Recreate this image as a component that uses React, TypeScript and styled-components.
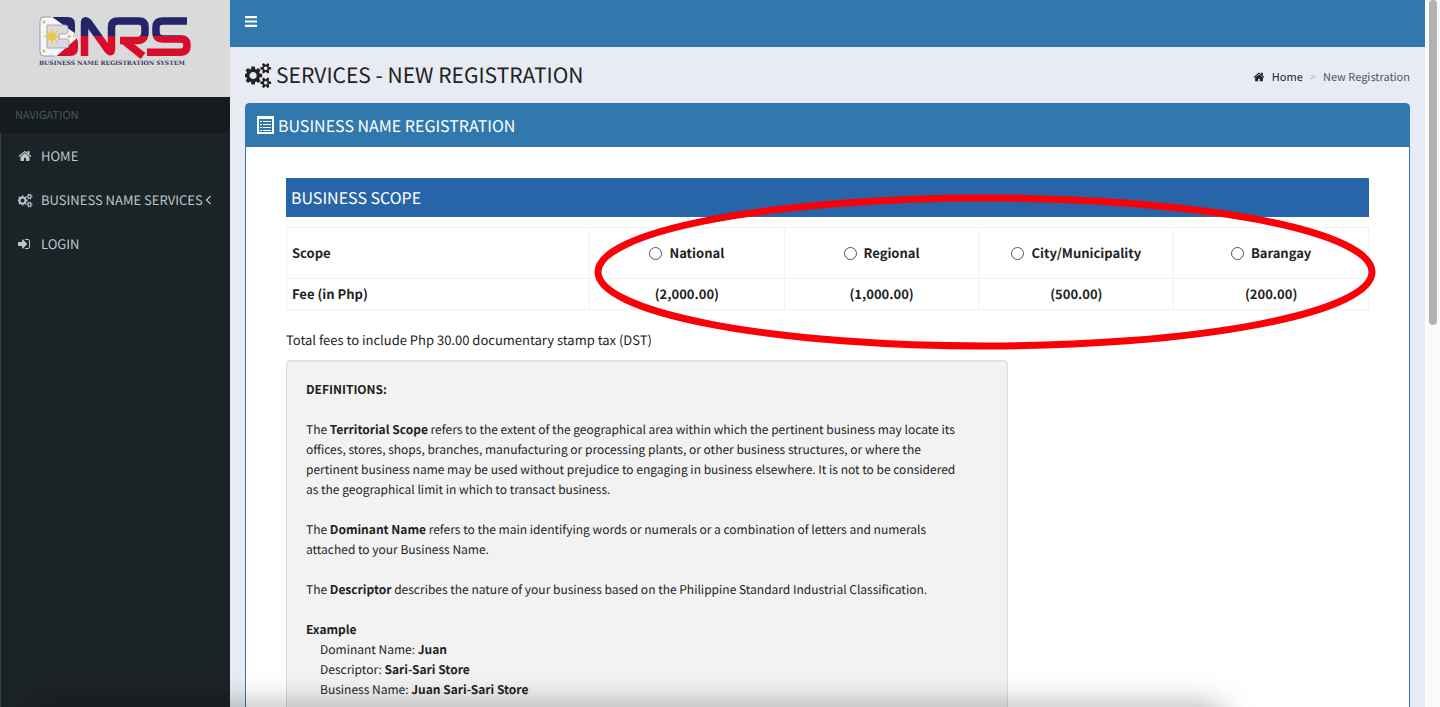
import React from "react";
import styled, { createGlobalStyle } from "styled-components";

const blue = "#3078ad";

const GlobalStyle = createGlobalStyle`
  * { box-sizing: border-box; }
  body {
    margin: 0;
    color: #222;
    font-family: "Noto Sans CJK SC", "Noto Sans", sans-serif;
    font-size: 13px;
    line-height: 20px;
    text-rendering: geometricPrecision;
  }
  a { color: inherit; text-decoration: none; }
  h1, h2, h3, p { margin: 0; font-weight: 400; }
`;

const Page = styled.div`
  position: relative;
  display: flex;
  height: 100vh;
  overflow: hidden;
`;

const Sidebar = styled.aside`
  flex: 0 0 230px;
  background: #1c2326;
  color: #b8c7ce;
  box-shadow: inset 1px 0 #3a4043;
`;

const Brand = styled.a`
  display: flex;
  height: 97px;
  padding: 14px 0 0 38px;
  background: #dadada;
`;

const NavHeading = styled.h2`
  padding: 8px 15px;
  background: #161b1e;
  color: #455861;
  font-size: 11px;
  line-height: 20px;
`;

const NavList = styled.ul`
  margin: 0;
  padding: 1px 0 0;
  list-style: none;
`;

const NavLink = styled.a`
  display: flex;
  align-items: center;
  height: 44px;
  padding: 0 18px;
  white-space: nowrap;
`;

const NavIcon = styled.span`
  display: flex;
  width: 23px;
`;

const NavArrow = styled.span`
  display: flex;
  margin-left: auto;
`;

const Main = styled.main`
  flex: 1;
  min-width: 0;
  background: #e8ebf3;
`;

const TopBar = styled.header`
  display: flex;
  align-items: center;
  height: 47px;
  padding: 0 15px 4px;
  background: ${blue};
`;

const MenuButton = styled.button`
  display: flex;
  padding: 0;
  border: 0;
  background: none;
  color: #fff;
`;

const TitleRow = styled.div`
  display: flex;
  align-items: center;
  justify-content: space-between;
  height: 56px;
  padding: 0 15px;
`;

const Title = styled.h1`
  display: flex;
  align-items: center;
  gap: 4px;
  font-size: 21px;
  line-height: 28px;
`;

const Crumbs = styled.nav`
  display: flex;
  align-items: center;
  gap: 7px;
  padding-top: 4px;
  font-size: 11px;
  color: #555;
`;

const CrumbLink = styled.a`
  display: flex;
  align-items: center;
  gap: 7px;
  color: #222;
`;

const Separator = styled.span`
  color: #bbb;
`;

const Panel = styled.section`
  margin: 0 15px;
  border: 1px solid ${blue};
  border-radius: 4px 4px 0 0;
  background: #fff;
`;

const PanelHeading = styled.h2`
  display: flex;
  align-items: center;
  gap: 4px;
  height: 43px;
  padding: 0 11px 2px;
  background: ${blue};
  color: #fff;
  font-size: 16px;
`;

const PanelBody = styled.div`
  padding: 31px 40px;
`;

const SectionHeading = styled.h3`
  height: 39px;
  margin-bottom: 10px;
  padding: 0 5px;
  background: #2864a8;
  color: #fff;
  font-size: 16px;
  line-height: 38px;
`;

const FeeTable = styled.table`
  width: 100%;
  border-collapse: collapse;
  table-layout: fixed;
  margin-bottom: 20px;
`;

const Cell = styled.td<{ $tall?: boolean }>`
  height: ${(p) => (p.$tall ? 51 : 31)}px;
  padding: 0 5px;
  border: 1px solid #f1f1f1;
  text-align: center;
  font-weight: 700;
`;

const RowHead = styled.th<{ $tall?: boolean }>`
  width: 28%;
  height: ${(p) => (p.$tall ? 51 : 31)}px;
  padding: 0 5px;
  border: 1px solid #f1f1f1;
  text-align: left;
`;

const Option = styled.label`
  display: flex;
  align-items: center;
  justify-content: center;
  gap: 7px;
`;

const Radio = styled.input`
  appearance: none;
  width: 13px;
  height: 13px;
  margin: 0;
  border: 1px solid #555;
  border-radius: 50%;
  background: #fff;
`;

const Definitions = styled.div`
  width: 722px;
  max-width: 100%;
  min-height: 400px;
  margin-top: 10px;
  padding: 19px 40px 19px 19px;
  border: 1px solid #dcdcdc;
  border-radius: 4px;
  background: #f2f2f2;
  box-shadow: inset 0 1px 1px rgba(0, 0, 0, 0.05);
  font-size: 12px;
`;

const Paragraph = styled.p`
  margin-bottom: 20px;
`;

const Example = styled.div`
  padding-left: 14px;
`;

const ScrollTrack = styled.div`
  flex: 0 0 15px;
  padding: 0 3px 0 4px;
  background: #fafafa;
`;

const ScrollThumb = styled.div`
  height: 46vh;
  border-radius: 4px;
  background: #b1b1b1;
`;

const Highlight = styled.svg`
  position: absolute;
  left: 593px;
  top: 193px;
  width: 784px;
  height: 157px;
  pointer-events: none;
`;

const BottomShade = styled.div`
  position: absolute;
  left: 30px;
  right: 215px;
  bottom: -30px;
  height: 30px;
  border-radius: 20px;
  box-shadow: 0 0 32px rgba(0, 0, 0, 0.35);
  pointer-events: none;
`;

const scopes = [
  { name: "National", fee: "(2,000.00)" },
  { name: "Regional", fee: "(1,000.00)" },
  { name: "City/Municipality", fee: "(500.00)" },
  { name: "Barangay", fee: "(200.00)" },
];

function HomeIcon({ size }: { size: number }) {
  return (
    <svg width={size} height={size} viewBox="0 0 1792 1792" fill="currentColor" aria-hidden="true">
      <path d="M1472 992v480q0 26-19 45t-45 19h-384v-384h-256v384h-384q-26 0-45-19t-19-45v-480q0-1 .5-3t.5-3l575-474 575 474q1 2 1 6zm223-69l-62 74q-8 9-21 11h-3q-13 0-21-7l-692-577-692 577q-12 8-24 7-13-2-21-11l-62-74q-8-10-7-23.5t11-21.5l719-599q32-26 76-26t76 26l244 204v-195q0-14 9-23t23-9h192q14 0 23 9t9 23v408l219 182q10 8 11 21.5t-7 23.5z" />
    </svg>
  );
}

function CogsIcon({ size }: { size: number }) {
  return (
    <svg width={size} height={size} viewBox="0 0 1920 1792" fill="currentColor" aria-hidden="true">
      <path d="M832 896q0-106-75-181t-181-75-181 75-75 181 75 181 181 75 181-75 75-181zm768 512q0-52-38-90t-90-38-90 38-38 90q0 53 37.5 90.5t90.5 37.5 90.5-37.5 37.5-90.5zm0-1024q0-52-38-90t-90-38-90 38-38 90q0 53 37.5 90.5t90.5 37.5 90.5-37.5 37.5-90.5zm-384 421v185q0 10-7 19.5t-16 10.5l-155 24q-11 35-32 76 34 48 90 115 7 11 7 20 0 12-7 19-23 30-82.5 89.5t-78.5 59.5q-11 0-21-7l-115-90q-37 19-77 31-11 108-23 155-7 24-30 24h-186q-11 0-20-7.5t-10-17.5l-23-153q-34-10-75-31l-118 89q-7 7-20 7-11 0-21-8-144-133-144-160 0-9 7-19 10-14 41-53t47-61q-23-44-35-82l-152-24q-10-1-17-9.5t-7-19.5v-185q0-10 7-19.5t16-10.5l155-24q11-35 32-76-34-48-90-115-7-11-7-20 0-12 7-20 22-30 82-89t79-59q11 0 21 7l115 90q34-18 77-32 11-108 23-154 7-24 30-24h186q11 0 20 7.5t10 17.5l23 153q34 10 75 31l118-89q8-7 20-7 11 0 21 8 144 133 144 160 0 8-7 19-12 16-42 54t-45 60q23 48 34 82l152 23q10 2 17 10.5t7 19.5zm640 533v140q0 16-149 31-12 27-30 52 51 113 51 138 0 4-4 7-122 71-124 71-8 0-46-47t-52-68q-20 2-30 2t-30-2q-14 21-52 68t-46 47q-2 0-124-71-4-3-4-7 0-25 51-138-18-25-30-52-149-15-149-31v-140q0-16 149-31 13-29 30-52-51-113-51-138 0-4 4-7 4-2 35-20t59-34 30-16q8 0 46 46.5t52 67.5q20-2 30-2t30 2q51-71 92-112l6-2q4 0 124 70 4 3 4 7 0 25-51 138 17 23 30 52 149 15 149 31zm0-1024v140q0 16-149 31-12 27-30 52 51 113 51 138 0 4-4 7-122 71-124 71-8 0-46-47t-52-68q-20 2-30 2t-30-2q-14 21-52 68t-46 47q-2 0-124-71-4-3-4-7 0-25 51-138-18-25-30-52-149-15-149-31v-140q0-16 149-31 13-29 30-52-51-113-51-138 0-4 4-7 4-2 35-20t59-34 30-16q8 0 46 46.5t52 67.5q20-2 30-2t30 2q51-71 92-112l6-2q4 0 124 70 4 3 4 7 0 25-51 138 17 23 30 52 149 15 149 31z" />
    </svg>
  );
}

function SignInIcon() {
  return (
    <svg width="14" height="14" viewBox="128 0 1792 1792" fill="currentColor" aria-hidden="true">
      <path d="M1312 896q0 26-19 45l-544 544q-19 19-45 19t-45-19-19-45v-288h-448q-26 0-45-19t-19-45v-384q0-26 19-45t45-19h448v-288q0-26 19-45t45-19 45 19l544 544q19 19 19 45zm352-352v704q0 119-84.5 203.5t-203.5 84.5h-320q-13 0-22.5-9.5t-9.5-22.5q0-4-1-20t-.5-26.5 3-23.5 10-19.5 20.5-6.5h320q66 0 113-47t47-113v-704q0-66-47-113t-113-47h-312l-11.5-1-11.5-3-8-5.5-7-9-2-13.5q0-4-1-20t-.5-26.5 3-23.5 10-19.5 20.5-6.5h320q119 0 203.5 84.5t84.5 203.5z" />
    </svg>
  );
}

function ArrowIcon() {
  return (
    <svg width="7" height="10" viewBox="0 0 7 10" fill="none" stroke="currentColor" strokeWidth="1.2" aria-hidden="true">
      <path d="M5.5 1L1.5 5L5.5 9" />
    </svg>
  );
}

function BarsIcon() {
  return (
    <svg width="12" height="11" viewBox="0 0 12 11" fill="currentColor" aria-hidden="true">
      <path d="M0 0H12V2.2H0ZM0 4.4H12V6.6H0ZM0 8.8H12V11H0Z" />
    </svg>
  );
}

function ListIcon() {
  return (
    <svg width="17" height="18" viewBox="0 0 17 18" fill="none" stroke="currentColor" aria-hidden="true">
      <path d="M0 1.5H17" strokeWidth="3" />
      <path d="M1 1V17H16V1" strokeWidth="2" />
      <path d="M3 5.5H5M6 5.5H14M3 8.5H5M6 8.5H14M3 11.5H5M6 11.5H14M3 14.5H5M6 14.5H14" />
    </svg>
  );
}

function Logo() {
  return (
    <svg width="154" height="56" viewBox="0 0 154 56" role="img" aria-label="BNRS">
      <defs>
        <linearGradient id="flag" gradientUnits="userSpaceOnUse" x1="0" y1="3" x2="0" y2="42">
          <stop offset="49%" stopColor="#232568" />
          <stop offset="49%" stopColor="#d80c2b" />
        </linearGradient>
        <clipPath id="letterB">
          <path d="M6 3H30Q37 3 37 10V17Q37 20 35 22Q40 24 40 29V34Q40 42 32 42H6Q2 42 2 38V7Q2 3 6 3Z" />
        </clipPath>
      </defs>
      <g clipPath="url(#letterB)">
        <path d="M0 0H42V46H0Z" fill="url(#flag)" />
        <path d="M0 0L10 0L38 20V25L14 46H0Z" fill="#f6f6f7" />
      </g>
      <path d="M13 3H6Q2 3 2 7V38Q2 42 6 42H17" fill="none" stroke="#9598bd" />
      <path d="M9 11H27Q30 11 30 14V17Q30 20 27 20H21V25H28Q31 25 31 28V31Q31 34 28 34H9Z" fill="#dadada" stroke="#9598bd" strokeWidth=".8" />
      <path d="M14 15V30M6 22.500H22M8.500 17L19.500 28M19.500 17L8.500 28" stroke="#efc64d" strokeWidth="1.5" />
      <circle cx="14" cy="22.500" r="4" fill="#efc64d" />
      <g fill="#e9c75c">
        <circle cx="6" cy="8" r="1.800" />
        <circle cx="6" cy="37" r="1.800" />
        <circle cx="31" cy="22.500" r="1.800" />
      </g>
      <g fill="none" stroke="url(#flag)" strokeWidth="7.500" strokeLinejoin="round">
        <path d="M46.500 42V9Q46.500 5 50 8L70 36Q73.500 40 73.500 35V13Q73.500 7 80 7H101Q107 7 107 13V18Q107 26 100 26.500H82" />
        <path d="M85 26L105 42" />
        <path d="M149 7H125Q118 7 118 13V18Q118 25 125 25H143Q149 25 149 31V32Q149 38.200 143 38.200H109" />
      </g>
      <text x="1" y="51" fill="#34366f" fontFamily="DejaVu Serif, serif" fontSize="6" fontWeight="700">BUSINESS NAME REGISTRATION SYSTEM</text>
    </svg>
  );
}

export default function App() {
  return (
    <>
      <GlobalStyle />
      <Page>
        <Sidebar>
          <Brand href="#"><Logo /></Brand>
          <NavHeading>NAVIGATION</NavHeading>
          <NavList>
            <li><NavLink href="#"><NavIcon><HomeIcon size={14} /></NavIcon>HOME</NavLink></li>
            <li>
              <NavLink href="#">
                <NavIcon><CogsIcon size={15} /></NavIcon>BUSINESS NAME SERVICES
                <NavArrow><ArrowIcon /></NavArrow>
              </NavLink>
            </li>
            <li><NavLink href="#"><NavIcon><SignInIcon /></NavIcon>LOGIN</NavLink></li>
          </NavList>
        </Sidebar>
        <Main>
          <TopBar><MenuButton aria-label="Toggle navigation"><BarsIcon /></MenuButton></TopBar>
          <TitleRow>
            <Title><CogsIcon size={27} />SERVICES - NEW REGISTRATION</Title>
            <Crumbs aria-label="Breadcrumb">
              <CrumbLink href="#"><HomeIcon size={12} />Home</CrumbLink>
              <Separator>&gt;</Separator>
              <span>New Registration</span>
            </Crumbs>
          </TitleRow>
          <Panel>
            <PanelHeading><ListIcon />BUSINESS NAME REGISTRATION</PanelHeading>
            <PanelBody>
              <SectionHeading>BUSINESS SCOPE</SectionHeading>
              <FeeTable>
                <tbody>
                  <tr>
                    <RowHead scope="row" $tall>Scope</RowHead>
                    {scopes.map((s) => (
                      <Cell key={s.name} $tall>
                        <Option><Radio type="radio" name="scope" />{s.name}</Option>
                      </Cell>
                    ))}
                  </tr>
                  <tr>
                    <RowHead scope="row">Fee (in Php)</RowHead>
                    {scopes.map((s) => <Cell key={s.name}>{s.fee}</Cell>)}
                  </tr>
                </tbody>
              </FeeTable>
              <p>Total fees to include Php 30.00 documentary stamp tax (DST)</p>
              <Definitions>
                <Paragraph><b>DEFINITIONS:</b></Paragraph>
                <Paragraph>
                  The <b>Territorial Scope</b> refers to the extent of the geographical area within which the pertinent business may locate its offices, stores, shops, branches, manufacturing or processing plants, or other business structures, or where the pertinent business name may be used without prejudice to engaging in business elsewhere. It is not to be considered as the geographical limit in which to transact business.
                </Paragraph>
                <Paragraph>
                  The <b>Dominant Name</b> refers to the main identifying words or numerals or a combination of letters and numerals attached to your Business Name.
                </Paragraph>
                <Paragraph>
                  The <b>Descriptor</b> describes the nature of your business based on the Philippine Standard Industrial Classification.
                </Paragraph>
                <p><b>Example</b></p>
                <Example>
                  <p>Dominant Name: <b>Juan</b></p>
                  <p>Descriptor: <b>Sari-Sari Store</b></p>
                  <p>Business Name: <b>Juan Sari-Sari Store</b></p>
                </Example>
              </Definitions>
            </PanelBody>
          </Panel>
        </Main>
        <ScrollTrack><ScrollThumb /></ScrollTrack>
        <Highlight viewBox="0 0 784 157" aria-hidden="true">
          <ellipse cx="392" cy="79" rx="387" ry="74" fill="none" stroke="#fb0007" strokeWidth="7" />
        </Highlight>
        <BottomShade />
      </Page>
    </>
  );
}
